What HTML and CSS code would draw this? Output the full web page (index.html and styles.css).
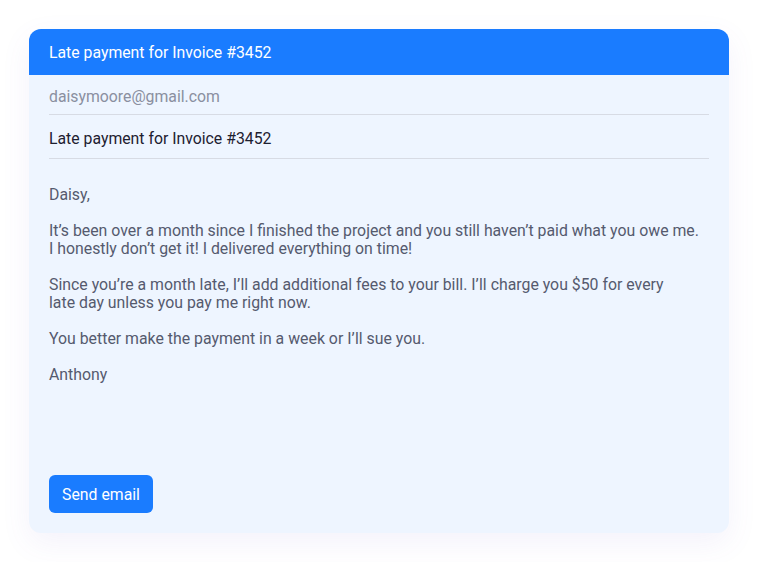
FILE: index.html
```html
<!DOCTYPE html>
<html>
<head>
<meta charset="utf-8">
<link rel="stylesheet" href="styles.css">
</head>
<body>
<div class="card">
  <div class="card-header">Late payment for Invoice #3452</div>
  <div class="card-body">
    <div class="field field-to">daisymoore@gmail.com</div>
    <div class="field field-subject">Late payment for Invoice #3452</div>
    <div class="message">
      <p>Daisy,</p>
      <p>It’s been over a month since I finished the project and you still haven’t paid what you owe me.<br>I honestly don’t get it! I delivered everything on time!</p>
      <p>Since you’re a month late, I’ll add additional fees to your bill. I’ll charge you $50 for every<br>late day unless you pay me right now.</p>
      <p>You better make the payment in a week or I’ll sue you.</p>
      <p>Anthony</p>
    </div>
    <button class="send-btn">Send email</button>
  </div>
</div>
</body>
</html>
```
FILE: styles.css
```css
html, body {
  margin: 0;
  padding: 0;
  background: #ffffff;
}
body {
  padding: 29px;
  font-family: Roboto, "Liberation Sans", sans-serif;
}
.card {
  width: 700px;
  height: 504px;
  background: #eef5ff;
  border-radius: 12px;
  box-shadow: 0 10px 30px rgba(110, 90, 200, 0.08);
  display: flex;
  flex-direction: column;
  overflow: hidden;
}
.card-header {
  background: #1a7cff;
  color: #ffffff;
  font-size: 15.8px;
  height: 44px;
  padding: 2px 20px 0;
  line-height: 44px;
  flex: none;
}
.card-body {
  flex: 1;
  display: flex;
  flex-direction: column;
  padding: 0 20px 20px;
}
.field {
  font-size: 15.8px;
  line-height: 20px;
  border-bottom: 1px solid #d7dbe4;
}
.field-to {
  color: #8a8fa0;
  padding: 12px 0 7px;
}
.field-subject {
  color: #1d2030;
  padding: 14px 0 9px;
}
.message {
  margin-top: 27px;
  color: #555a6e;
  font-size: 15.85px;
  line-height: 18px;
}
.message p {
  margin: 0 0 18px;
}
.message p:last-child {
  margin-bottom: 0;
}
.send-btn {
  margin-top: auto;
  align-self: flex-start;
  background: #1a7cff;
  color: #ffffff;
  border: none;
  border-radius: 6px;
  height: 38px;
  width: 104px;
  padding: 0;
  font-family: Roboto, "Liberation Sans", sans-serif;
  font-size: 15.8px;
}
```
